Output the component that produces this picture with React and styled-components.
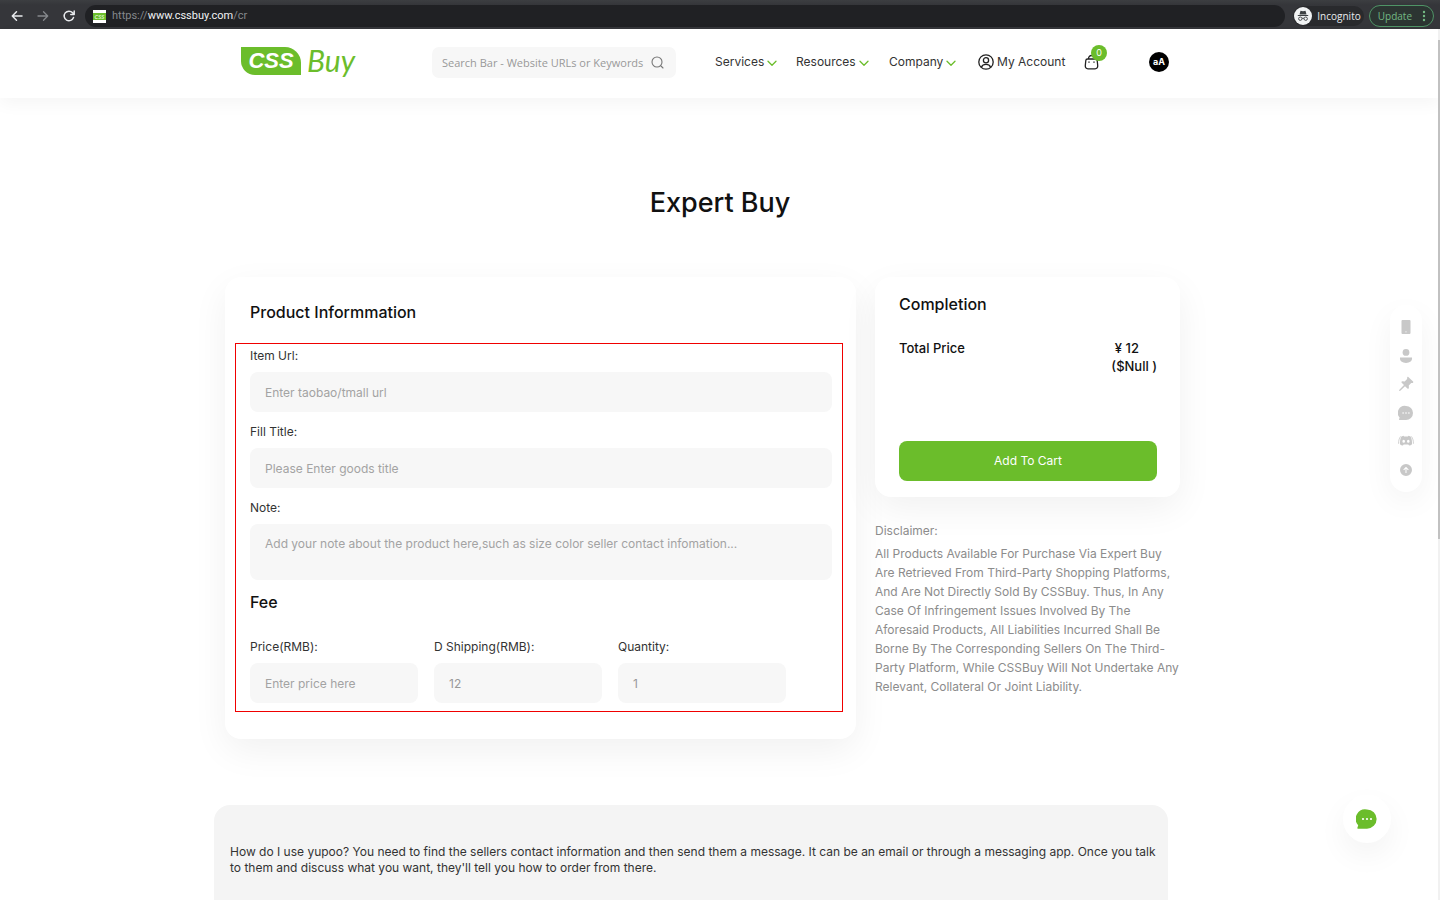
import React from "react";
import styled, { createGlobalStyle } from "styled-components";

const GREEN = "#6bbd2b";
const FONT = `Inter, "Liberation Sans", sans-serif`;

const GlobalStyle = createGlobalStyle`
  *, *::before, *::after { box-sizing: border-box; }
  body { margin: 0; background: #fff; color: #333; font-family: ${FONT}; font-size: 12px; line-height: 16px; }
  h1, h2, p { margin: 0; }
  a { color: inherit; text-decoration: none; }
  button, input, textarea { font: inherit; border: 0; outline: 0; }
  button { padding: 0; background: none; color: inherit; cursor: pointer; }
  svg { display: block; flex: none; }
`;

const Page = styled.div`
  height: 100vh;
  display: flex;
  flex-direction: column;
  overflow: hidden;
`;

/* Browser bar */
const BrowserBar = styled.div`
  flex: none;
  height: 29px;
  display: flex;
  align-items: center;
  padding: 3px 6px 0 10px;
  background: linear-gradient(#3c3e41, #35363a 5px);
  font-family: "Open Sans", "Noto Sans", sans-serif;
  font-size: 10px;
  color: #e8eaed;
`;
const NavButtons = styled.div`
  display: flex;
  gap: 12px;
  width: 75px;
`;
const AddressBar = styled.div`
  flex: 1;
  height: 22px;
  display: flex;
  align-items: center;
  gap: 6px;
  padding: 0 8px;
  border-radius: 11px;
  background: #202124;
  color: #85888c;
  font-family: Roboto, sans-serif;
  font-size: 11px;
  b { font-weight: 400; color: #f1f3f4; }
`;
const Favicon = styled.span`
  width: 13px;
  height: 13px;
  display: flex;
  align-items: center;
  background: #fff;
  i { width: 13px; height: 7px; background: ${GREEN}; color: #d9f2c5; font: italic 700 6px/7px Lato, sans-serif; text-align: center; }
`;
const IncognitoTag = styled.div`
  height: 20px;
  display: flex;
  align-items: center;
  gap: 5px;
  margin: 0 5px 0 8px;
  padding: 0 3px 0 1px;
  border-radius: 10px;
  background: #292a2d;
`;
const UpdateButton = styled.button`
  height: 22px;
  display: flex;
  align-items: center;
  gap: 10px;
  padding: 0 7px 0 8px;
  border: 1px solid #4f9466;
  border-radius: 11px;
  background: #2c3532;
  color: #73b984;
`;

/* Site header */
const Header = styled.header`
  flex: none;
  position: relative;
  height: 69px;
  display: flex;
  align-items: flex-start;
  padding: 15px 271px 0 241px;
  box-shadow: 0 6px 16px rgba(0, 0, 0, 0.04);
`;
const Logo = styled.a`
  display: flex;
  align-items: center;
  gap: 6px;
  width: 191px;
  height: 32px;
  color: ${GREEN};
  font: italic 400 30px/32px Lato, sans-serif;
`;
const Leaf = styled.span`
  width: 60px;
  height: 28px;
  margin-top: 2px;
  border-radius: 0 16px 0 14px;
  background: ${GREEN};
  color: #fff;
  font: italic 700 22px/28px "Liberation Sans", sans-serif;
  text-align: center;
`;
const Search = styled.form`
  flex: 1;
  height: 31px;
  display: flex;
  align-items: center;
  margin: 3px 39px 0 0;
  padding: 0 12px 0 10px;
  border-radius: 7px;
  background: #f7f7f7;
  input {
    flex: 1;
    min-width: 0;
    padding: 0;
    background: none;
    font-family: "Open Sans", sans-serif;
    font-size: 11px;
    &::placeholder { color: #999; opacity: 1; }
  }
`;
const Menu = styled.nav`
  display: grid;
  grid-template-columns: 81px 93px 89px 106px 65px 20px;
  align-items: center;
  height: 36px;
`;
const MenuLink = styled.a`
  display: flex;
  align-items: center;
  gap: 3px;
  white-space: nowrap;
`;
const Bag = styled.a`
  position: relative;
  width: 24px;
`;
const BagCount = styled.span`
  position: absolute;
  top: -9px;
  left: 7px;
  width: 16px;
  height: 16px;
  border-radius: 50%;
  background: ${GREEN};
  color: #fff;
  font-size: 9px;
  text-align: center;
`;
const LanguageButton = styled.button`
  width: 20px;
  height: 20px;
  border-radius: 50%;
  background: #000;
  color: #fff;
  font-size: 9px;
  font-weight: 700;
`;

/* Main area */
const Title = styled.h1`
  flex: none;
  margin: 85px 0 54px;
  color: #111;
  font-size: 27px;
  font-weight: 500;
  line-height: 40px;
  text-align: center;
`;
const Columns = styled.main`
  flex: none;
  display: grid;
  grid-template-columns: minmax(0, 631fr) minmax(0, 305fr);
  align-items: start;
  gap: 19px;
  padding: 0 260px 0 225px;
`;
const Card = styled.section`
  border-radius: 16px;
  background: #fff;
  box-shadow: 0 12px 36px rgba(0, 0, 0, 0.06);
`;
const ProductCard = styled(Card)`
  padding: 23px 13px 27px 10px;
`;
const SectionTitle = styled.h2`
  color: #111;
  font-size: 16px;
  font-weight: 500;
  line-height: 24px;
`;
const ProductTitle = styled(SectionTitle)`
  margin: 0 0 19px 15px;
`;
const FormFrame = styled.form`
  display: flex;
  flex-direction: column;
  gap: 12px;
  padding: 4px 10px 8px 14px;
  border: 1px solid #f00000;
`;
const FieldBox = styled.label`
  display: flex;
  flex-direction: column;
  gap: 8px;
  input, textarea {
    width: 100%;
    height: 40px;
    padding: 0 15px;
    border-radius: 8px;
    background: #f7f7f7;
    color: #999;
    resize: none;
    &::placeholder { color: #a3a3a3; opacity: 1; }
  }
  textarea { height: 56px; padding: 12px 15px; overflow: hidden; }
`;
const FeeTitle = styled(SectionTitle)`
  margin: -2px 0 13px;
`;
const FeeRow = styled.div`
  display: grid;
  grid-template-columns: repeat(3, minmax(0, 1fr));
  gap: 16px;
  padding-right: 46px;
`;
const CompletionCard = styled(Card)`
  padding: 15px 23px 16px 24px;
`;
const TotalRow = styled.div`
  display: flex;
  justify-content: space-between;
  margin: 23px 0 66px;
  color: #111;
  font-size: 13px;
  font-weight: 500;
  line-height: 18px;
`;
const Amount = styled.span`
  white-space: pre-line;
`;
const CartButton = styled.button`
  width: 100%;
  height: 40px;
  border-radius: 8px;
  background: ${GREEN};
  color: #fff;
`;
const Disclaimer = styled.div`
  margin-top: 24px;
  color: #8c8c8c;
  line-height: 19px;
  white-space: pre-line;
  p + p { margin-top: 4px; }
`;
const Faq = styled.section`
  flex: 1;
  margin: 66px 272px 0 214px;
  padding: 39px 0 39px 16px;
  border-radius: 16px 16px 0 0;
  background: #f4f4f4;
  white-space: pre-line;
`;

/* Floating controls */
const SideTools = styled.aside`
  position: fixed;
  top: 305px;
  right: 18px;
  width: 32px;
  height: 187px;
  display: flex;
  flex-direction: column;
  align-items: center;
  justify-content: space-between;
  padding: 14px 0;
  border-radius: 16px;
  background: #fff;
  color: #c8c8c8;
  box-shadow: 0 10px 30px rgba(0, 0, 0, 0.05);
`;
const ChatButton = styled.button`
  position: fixed;
  right: 49px;
  bottom: 57px;
  width: 48px;
  height: 48px;
  display: grid;
  place-items: center;
  border-radius: 50%;
  background: #fff;
  color: ${GREEN};
  box-shadow: 0 12px 30px rgba(0, 0, 0, 0.05);
`;
const ScrollTrack = styled.div`
  position: fixed;
  top: 29px;
  right: 0;
  bottom: 0;
  width: 2px;
  padding-top: 11px;
  background: #f1f1f1;
  &::before { content: ""; display: block; height: 58%; background: #c1c1c1; }
`;

const Stroke = ({ size = 16, box = 16, width = 1, children, ...rest }) => (
  <svg width={size} height={size} viewBox={`0 0 ${box} ${box}`} fill="none" stroke="currentColor" strokeWidth={width} strokeLinecap="round" strokeLinejoin="round" aria-hidden="true" {...rest}>
    {children}
  </svg>
);
const Solid = ({ size = 16, children }) => (
  <svg width={size} height={size} viewBox="0 0 16 16" fill="currentColor" aria-hidden="true">{children}</svg>
);
const Chevron = () => (
  <Stroke size={10} box={10} width={1.3} color={GREEN}><path d="M1 4.2 5 8.2 9 4.2" /></Stroke>
);
const ChatShape = () => (
  <>
    <path d="M8 1a7 7 0 1 1 0 14H1.4c-.5 0-.6-.5-.3-.8l.5-1.6A7 7 0 0 1 8 1Z" />
    <g fill="#fff"><circle cx="5.1" cy="8" r=".8" /><circle cx="8" cy="8" r=".8" /><circle cx="10.9" cy="8" r=".8" /></g>
  </>
);

const tools = [
  ["Mobile app", <path fillRule="evenodd" d="M4.500 1h7a1 1 0 0 1 1 1v12a1 1 0 0 1-1 1h-7a1 1 0 0 1-1-1V2a1 1 0 0 1 1-1ZM8 12.200a.6.6 0 1 0 0 1.200.6.6 0 0 0 0-1.200Z" />],
  ["Account", <><circle cx="8" cy="4.4" r="3.4" /><path d="M2 9.6h12c.6 3.4-2.3 5.4-6 5.4s-6.600-2-6-5.400Z" /></>],
  ["Pin", <path d="m10.300.9 4.800 4.700c.5.5.2 1.200-.5 1.300l-1.400.1-2.400 2.500.1 2.300c0 .9-.9 1.300-1.500.7L7 10.200l-4.700 4.500-1.300.4.4-1.300L6 9.100 3.700 6.800c-.6-.6-.2-1.500.7-1.500l2.300.1 2.400-2.500.1-1.500c0-.700.6-1 1.100-.5Z" />],
  ["Messages", <ChatShape />],
  ["Discord", <>
    <path fillRule="evenodd" d="M5.600 2.700 6 3.400h4l.4-.7 2.200.8c1.200 2.300 1.600 4.900 1.400 7.700-.7.700-1.700 1.200-2.900 1.400l-.8-1.100H5.700l-.8 1.100c-1.200-.2-2.200-.7-2.900-1.400-.2-2.800.2-5.400 1.400-7.700l2.200-.8ZM5.700 6.700a1.300 1.500 0 1 0 0 3 1.300 1.500 0 0 0 0-3Zm4.600 0a1.300 1.500 0 1 0 0 3 1.300 1.500 0 0 0 0-3Z" />
    <path d="M2.600 3.400C1.100 5.500.4 8 .6 10.800M13.400 3.400c1.500 2.100 2.200 4.600 2 7.400" fill="none" stroke="currentColor" strokeWidth=".8" />
  </>],
  ["Back to top", <path fillRule="evenodd" d="M8 2a6 6 0 1 1 0 12A6 6 0 0 1 8 2Zm0 2.800L5.300 7.500l.7.700 1.500-1.400V11h1V6.800L10 8.200l.7-.7L8 4.800Z" />],
];

const Field = ({ label, multiline, ...rest }) => (
  <FieldBox>
    {label}
    {multiline ? <textarea {...rest} /> : <input type="text" {...rest} />}
  </FieldBox>
);

const disclaimer = `All Products Available For Purchase Via Expert Buy
Are Retrieved From Third-Party Shopping Platforms,
And Are Not Directly Sold By CSSBuy. Thus, In Any
Case Of Infringement Issues Involved By The
Aforesaid Products, All Liabilities Incurred Shall Be
Borne By The Corresponding Sellers On The Third-
Party Platform, While CSSBuy Will Not Undertake Any
Relevant, Collateral Or Joint Liability.`;

const faq = `How do I use yupoo? You need to find the sellers contact information and then send them a message. It can be an email or through a messaging app. Once you talk
to them and discuss what you want, they'll tell you how to order from there.`;

export default function App() {
  return (
    <Page>
      <GlobalStyle />
      <BrowserBar>
        <NavButtons>
          <Stroke size={14} box={14} width={1.5} color="#e8eaed"><path d="M12 7H2.500M6.500 2.800 2.300 7l4.200 4.200" /></Stroke>
          <Stroke size={14} box={14} width={1.3} color="#85888c"><path d="M2 7h9.500M7.500 2.800 11.700 7l-4.200 4.200" /></Stroke>
          <Stroke size={14} box={14} width={1.5} color="#e8eaed"><path d="M11.500 8.500A4.800 4.800 0 1 1 10.600 3.800L12 5.200M12.200 2v3.400H8.800" /></Stroke>
        </NavButtons>
        <AddressBar>
          <Favicon><i>CSS</i></Favicon>
          <span>https://<b>www.cssbuy.com</b>/cr</span>
        </AddressBar>
        <IncognitoTag>
          <svg width="18" height="18" viewBox="0 0 18 18" aria-hidden="true">
            <circle cx="9" cy="9" r="9" fill="#f1f3f4" />
            <path d="M6.500 3.800 9 4.300l2.500-.5 1 3.700h-7ZM3.800 8h10.400v.9H3.800Z" fill="#3c4043" />
            <g fill="none" stroke="#3c4043" strokeWidth=".9"><circle cx="6.300" cy="11.700" r="1.700" /><circle cx="11.700" cy="11.700" r="1.700" /><path d="M8 11.400q1-.5 2 0" /></g>
          </svg>
          Incognito
        </IncognitoTag>
        <UpdateButton type="button">
          Update
          <svg width="4" height="12" viewBox="0 0 4 12" fill="currentColor" aria-hidden="true"><circle cx="2" cy="2" r="1.200" /><circle cx="2" cy="6" r="1.200" /><circle cx="2" cy="10" r="1.200" /></svg>
        </UpdateButton>
      </BrowserBar>

      <Header>
        <Logo href="#"><Leaf>CSS</Leaf>Buy</Logo>
        <Search>
          <input type="text" aria-label="Search" placeholder="Search Bar - Website URLs or Keywords" />
          <Stroke size={13} box={13} width={1.100} color="#777"><circle cx="6" cy="6" r="5" /><path d="m10 10 2 2" /></Stroke>
        </Search>
        <Menu>
          <MenuLink href="#">Services<Chevron /></MenuLink>
          <MenuLink href="#">Resources<Chevron /></MenuLink>
          <MenuLink href="#">Company<Chevron /></MenuLink>
          <MenuLink href="#">
            <Stroke width={1.300} color="#222"><circle cx="8" cy="8" r="7.200" /><circle cx="8" cy="6.300" r="2.600" /><path d="M3.400 13.200c.8-2 2.500-2.900 4.600-2.900s3.800.9 4.600 2.900" /></Stroke>
            My Account
          </MenuLink>
          <Bag href="#" aria-label="Cart">
            <Stroke width={1.300} color="#222"><path d="M3.500 5h8c1 0 1.600.5 1.700 1.500l.5 5c.2 2-.8 3.300-2.700 3.300H4c-1.900 0-2.900-1.300-2.700-3.300l.5-5C1.900 5.500 2.500 5 3.500 5ZM4.500 5c0-2 1.200-3.500 3-3.500s3 1.500 3 3.500M5 8v.3M10 8v.3" /></Stroke>
            <BagCount>0</BagCount>
          </Bag>
          <LanguageButton type="button" aria-label="Language">aA</LanguageButton>
        </Menu>
      </Header>

      <Title>Expert Buy</Title>

      <Columns>
        <ProductCard>
          <ProductTitle>Product Informmation</ProductTitle>
          <FormFrame>
            <Field label="Item Url:" placeholder="Enter taobao/tmall url" />
            <Field label="Fill Title:" placeholder="Please Enter goods title" />
            <Field label="Note:" multiline placeholder="Add your note about the product here,such as size color seller contact infomation..." />
            <FeeTitle>Fee</FeeTitle>
            <FeeRow>
              <Field label="Price(RMB):" placeholder="Enter price here" />
              <Field label="D Shipping(RMB):" defaultValue="12" />
              <Field label="Quantity:" defaultValue="1" />
            </FeeRow>
          </FormFrame>
        </ProductCard>

        <div>
          <CompletionCard>
            <SectionTitle>Completion</SectionTitle>
            <TotalRow>
              <span>Total Price</span>
              <Amount>{"\u00a0¥ 12\n($Null )"}</Amount>
            </TotalRow>
            <CartButton type="button">Add To Cart</CartButton>
          </CompletionCard>
          <Disclaimer>
            <p>Disclaimer:</p>
            <p>{disclaimer}</p>
          </Disclaimer>
        </div>
      </Columns>

      <Faq><p>{faq}</p></Faq>

      <SideTools>
        {tools.map(([name, shape]) => (
          <button key={name} type="button" aria-label={name}><Solid>{shape}</Solid></button>
        ))}
      </SideTools>
      <ChatButton type="button" aria-label="Chat"><Solid size={22}><ChatShape /></Solid></ChatButton>
      <ScrollTrack />
    </Page>
  );
}
